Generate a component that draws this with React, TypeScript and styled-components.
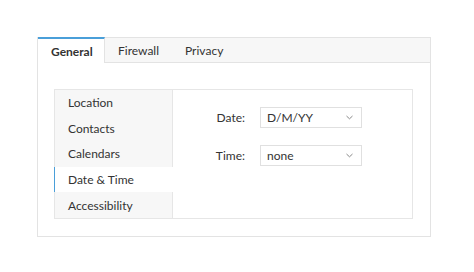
import React from "react";
import styled, { createGlobalStyle } from "styled-components";

const Global = createGlobalStyle`
  body {
    margin: 0;
    background: #fff;
    font-family: Lato, "Open Sans", sans-serif;
    font-size: 12px;
    color: #333;
  }
`;

const Page = styled.div`
  padding: 37px 0 0 37px;
`;

const Panel = styled.div`
  width: 392px;
  height: 198px;
  border: 1px solid #e3e3e3;
  display: flex;
  flex-direction: column;
`;

const TabBar = styled.div`
  display: flex;
  height: 24px;
  background: #f7f7f7;
  border-bottom: 1px solid #e3e3e3;
`;

const Tab = styled.div<{ $active?: boolean }>`
  padding: 0 12px 0 13px;
  display: flex;
  align-items: center;
  font-weight: ${(p) => (p.$active ? 700 : 400)};
  background: ${(p) => (p.$active ? "#fff" : "transparent")};
  border-top: 2px solid ${(p) => (p.$active ? "#4a9fd9" : "transparent")};
  border-right: 1px solid ${(p) => (p.$active ? "#e3e3e3" : "transparent")};
  margin-top: -1px;
  margin-bottom: ${(p) => (p.$active ? "-1px" : "0")};
  height: ${(p) => (p.$active ? "24px" : "23px")};
  width: ${(p) => (p.$active ? "41px" : "auto")};
`;

const Body = styled.div`
  padding: 26px 17px 0 16px;
`;

const Inner = styled.div`
  display: flex;
  height: 128px;
  border: 1px solid #e6e6e6;
`;

const SideList = styled.div`
  width: 118px;
  display: flex;
  flex-direction: column;
`;

const SideItem = styled.div<{ $active?: boolean }>`
  flex: 1;
  display: flex;
  align-items: center;
  padding-left: 13px;
  margin-left: ${(p) => (p.$active ? "-1px" : "0")};
  background: ${(p) => (p.$active ? "#fff" : "#f7f7f7")};
  border-left: ${(p) => (p.$active ? "1px solid #4a9fd9" : "none")};
  border-right: 1px solid ${(p) => (p.$active ? "transparent" : "#e6e6e6")};
`;

const Form = styled.div`
  flex: 1;
  display: grid;
  grid-template-columns: 72px 102px;
  column-gap: 15px;
  row-gap: 17px;
  align-content: start;
  padding-top: 17px;
`;

const Label = styled.div`
  display: flex;
  align-items: center;
  justify-content: flex-end;
`;

const Select = styled.div`
  height: 19px;
  border: 1px solid #e0e0e0;
  display: flex;
  align-items: center;
  justify-content: space-between;
  padding: 0 8px 0 6px;
`;

const Chevron = () => (
  <svg width="7" height="5" viewBox="0 0 7 5">
    <path d="M0.5 1 L3.5 3.8 L6.5 1" fill="none" stroke="#888" strokeWidth="1" />
  </svg>
);

export default function App() {
  return (
    <Page>
      <Global />
      <Panel>
        <TabBar>
          <Tab $active>General</Tab>
          <Tab>Firewall</Tab>
          <Tab>Privacy</Tab>
        </TabBar>
        <Body>
          <Inner>
            <SideList>
              <SideItem>Location</SideItem>
              <SideItem>Contacts</SideItem>
              <SideItem>Calendars</SideItem>
              <SideItem $active>Date &amp; Time</SideItem>
              <SideItem>Accessibility</SideItem>
            </SideList>
            <Form>
              <Label>Date:</Label>
              <Select>
                D/M/YY <Chevron />
              </Select>
              <Label>Time:</Label>
              <Select>
                none <Chevron />
              </Select>
            </Form>
          </Inner>
        </Body>
      </Panel>
    </Page>
  );
}
